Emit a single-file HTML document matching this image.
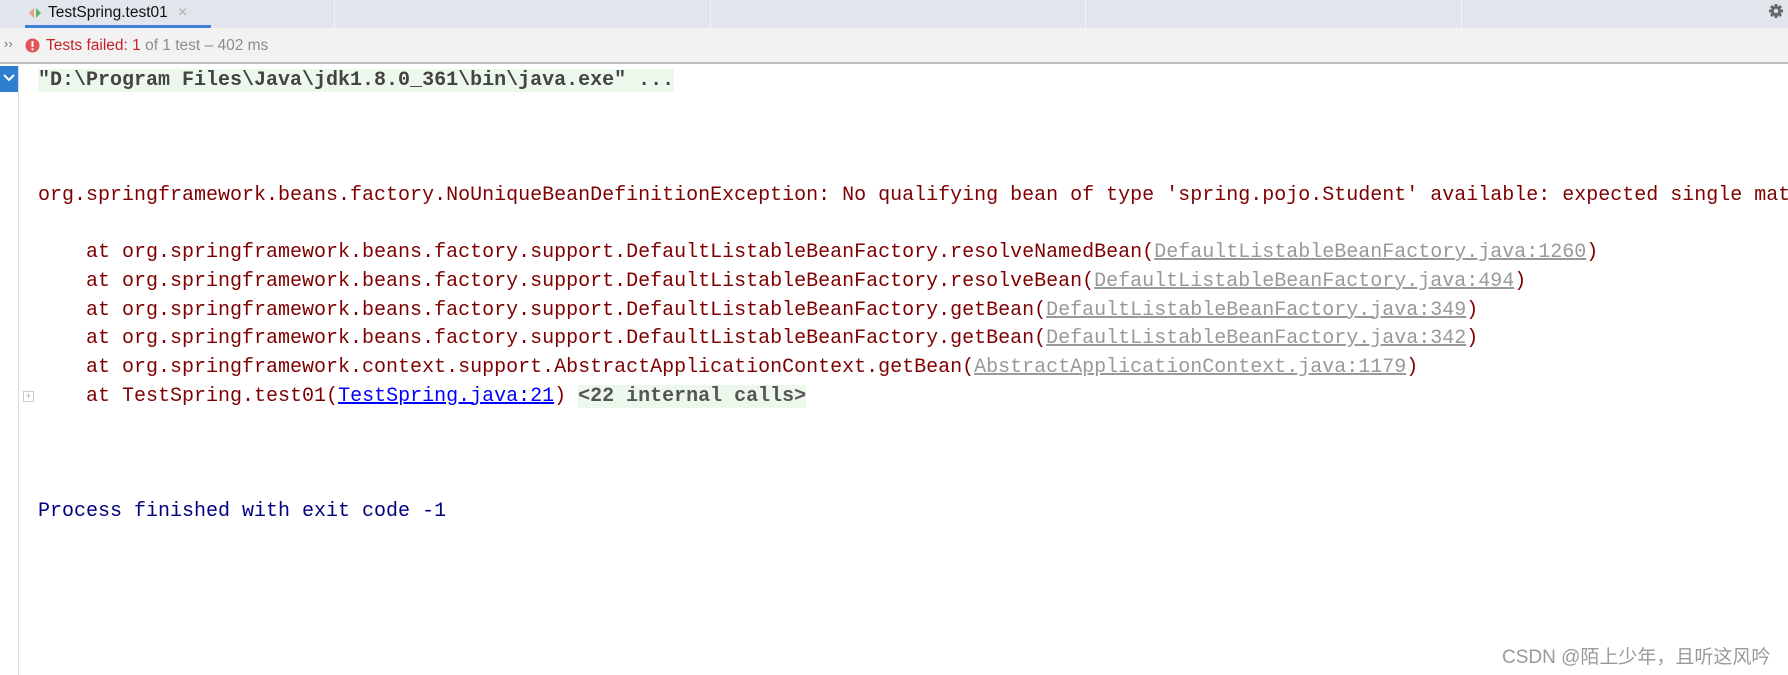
<!DOCTYPE html>
<html><head><meta charset="utf-8"><style>
*{margin:0;padding:0;box-sizing:border-box}
body{width:1788px;height:675px;background:#fff;position:relative;overflow:hidden;font-family:"Liberation Sans",sans-serif}
.tabs{position:absolute;left:0;top:0;width:1788px;height:28px;background:#e2e5ec}
.sep{position:absolute;top:0;width:1px;height:28px;background:#f2f3f6}
.tab{position:absolute;left:48px;top:4px;font-size:15.5px;color:#111}
.ul{position:absolute;left:25px;top:25px;width:186px;height:3px;background:#3d7fd9}
.status{position:absolute;left:0;top:28px;width:1788px;height:36px;background:#f2f2f2;border-bottom:2px solid #bdbdbd}
.gut{position:absolute;left:0;top:66px;width:19px;height:609px;border-right:1px solid #ddd}
.con{position:absolute;left:38px;top:67px;width:1750px;overflow:hidden;font-family:"Liberation Mono",monospace;font-size:20px;line-height:28.7px;white-space:pre;color:#7f0000}
.b{font-weight:bold}
.g{background:#edf8ec}
.lk{color:#999;text-decoration:underline}
.bl{color:#0000ff;text-decoration:underline}
</style></head><body>
<div class="tabs">
<div class="sep" style="left:334px"></div><div class="sep" style="left:710px"></div><div class="sep" style="left:1085px"></div><div class="sep" style="left:1461px"></div>
<svg style="position:absolute;left:28px;top:7px" width="14" height="12"><path d="M6 1L1 6L6 11Z" fill="#e8a07e"/><path d="M8 1L13 6L8 11Z" fill="#5fb760"/></svg>
<div class="tab">TestSpring.test01 <span style="color:#aaa;margin-left:6px">×</span></div>
<div class="ul"></div>
<svg style="position:absolute;left:1768px;top:3px" width="16" height="16" viewBox="0 0 16 16"><g fill="#666"><circle cx="8" cy="8" r="5"/><rect x="6.5" y="1" width="3" height="14"/><rect x="1" y="6.5" width="14" height="3"/><rect x="6.5" y="1" width="3" height="14" transform="rotate(45 8 8)"/><rect x="6.5" y="1" width="3" height="14" transform="rotate(-45 8 8)"/></g><circle cx="8" cy="8" r="2.2" fill="#e2e5ec"/></svg>
</div>
<div class="status">
<span style="position:absolute;left:4px;top:8px;font-size:13px;color:#777">››</span>
<svg style="position:absolute;left:25px;top:10px" width="15" height="15"><circle cx="7.5" cy="7.5" r="7" fill="#e05555"/><rect x="6.5" y="3" width="2" height="6" fill="#fff"/><rect x="6.5" y="10.3" width="2" height="2" fill="#fff"/></svg>
<span style="position:absolute;left:46px;top:9px;font-size:15.5px;color:#c7222a">Tests failed: 1 <span style="color:#8c8c8c">of 1 test – 402 ms</span></span>
</div>
<div class="gut"></div>
<div style="position:absolute;left:0;top:66px;width:18px;height:26px;background:#2f7fd0"></div>
<svg style="position:absolute;left:3px;top:73px" width="12" height="10"><path d="M1 2L6 7L11 2" stroke="#fff" stroke-width="2" fill="none"/></svg>
<div style="position:absolute;left:23px;top:391px;width:11px;height:11px;border:1px solid #ccc;font-size:9px;line-height:9px;text-align:center;color:#aaa">+</div>
<div class="con"><span class="b g" style="color:#444">"D:\Program Files\Java\jdk1.8.0_361\bin\java.exe" ...</span>



org.springframework.beans.factory.NoUniqueBeanDefinitionException: No qualifying bean of type 'spring.pojo.Student' available: expected single matching bean but found 2

    at org.springframework.beans.factory.support.DefaultListableBeanFactory.resolveNamedBean(<span class="lk">DefaultListableBeanFactory.java:1260</span>)
    at org.springframework.beans.factory.support.DefaultListableBeanFactory.resolveBean(<span class="lk">DefaultListableBeanFactory.java:494</span>)
    at org.springframework.beans.factory.support.DefaultListableBeanFactory.getBean(<span class="lk">DefaultListableBeanFactory.java:349</span>)
    at org.springframework.beans.factory.support.DefaultListableBeanFactory.getBean(<span class="lk">DefaultListableBeanFactory.java:342</span>)
    at org.springframework.context.support.AbstractApplicationContext.getBean(<span class="lk">AbstractApplicationContext.java:1179</span>)
    at TestSpring.test01(<span class="bl">TestSpring.java:21</span>) <span class="b g" style="color:#555">&lt;22 internal calls&gt;</span>



<span style="color:#000080">Process finished with exit code -1</span></div>
<div style="position:absolute;left:1502px;top:642px;font-size:19px;color:#9a9a9a;font-family:'Liberation Sans','Noto Sans CJK SC',sans-serif">CSDN @陌上少年，且听这风吟</div>
</body></html>
